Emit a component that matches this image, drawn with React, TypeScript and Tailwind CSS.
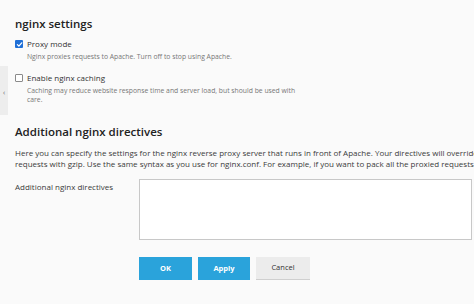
import React from 'react';

const font = { fontFamily: '"Open Sans", "Liberation Sans", sans-serif' };

const CheckBox = ({ checked }: { checked: boolean }) =>
  checked ? (
    <span className="w-[8px] h-[8px] rounded-[1px] bg-[#1f6fd6] flex items-center justify-center shrink-0">
      <svg viewBox="0 0 10 10" className="w-[7px] h-[7px]">
        <path d="M2 5.2 L4.1 7.3 L8.2 2.6" fill="none" stroke="white" strokeWidth="1.8" strokeLinecap="round" strokeLinejoin="round" />
      </svg>
    </span>
  ) : (
    <span className="w-[8px] h-[8px] rounded-[1px] bg-white border border-[#8a8a8a] shrink-0" />
  );

const App = () => {
  return (
    <div className="w-[474px] h-[304px] overflow-hidden bg-[#fafafa] relative text-[#333]" style={font}>
      {/* collapse sidebar tab */}
      <div className="absolute left-0 top-[66px] w-[8px] h-[49px] bg-[#ededed] flex items-center justify-center pt-[4px]">
        <span className="text-[7px] leading-none text-[#666]">‹</span>
      </div>

      <div className="pl-[15px] w-[900px]">
        <h2 className="text-[11.5px] leading-[16px] font-semibold pt-[16px] text-[#222]">nginx settings</h2>

        {/* Proxy mode */}
        <div className="flex items-center gap-[4px] mt-[7px] h-[10px]">
          <CheckBox checked />
          <span className="text-[8px] leading-[10px]">Proxy mode</span>
        </div>
        <p className="ml-[12px] mt-[3px] text-[6.8px] leading-[9px] text-[#777]">
          Nginx proxies requests to Apache. Turn off to stop using Apache.
        </p>

        {/* caching */}
        <div className="flex items-center gap-[4px] mt-[12px] h-[10px]">
          <CheckBox checked={false} />
          <span className="text-[8px] leading-[10px]">Enable nginx caching</span>
        </div>
        <p className="ml-[12px] mt-[3px] text-[6.8px] leading-[9px] text-[#777] w-[278px]">
          Caching may reduce website response time and server load, but should be used with care.
        </p>

        <h2 className="text-[11.5px] leading-[16px] font-semibold mt-[20px] text-[#222]">Additional nginx directives</h2>
        <p className="mt-[7px] text-[8px] leading-[11px] text-[#3a3a3a]">
          <span className="block whitespace-nowrap">
            Here you can specify the settings for the nginx reverse proxy server that runs in front of Apache. Your directives will override the server-wide nginx configuration. For example, you may want to change the connection timeout or to pack
          </span>
          <span className="block whitespace-nowrap">
            requests with gzip. Use the same syntax as you use for nginx.conf. For example, if you want to pack all the proxied requests with gzip, add the line: 'gzip_proxied any;'.
          </span>
        </p>

        <div className="flex mt-[10px]">
          <label className="w-[124px] shrink-0 pt-[3px] text-[8px] leading-[10px] text-[#3a3a3a]">
            Additional nginx directives
          </label>
          <div className="w-[333px] h-[61px] bg-white border border-[#c8c8c8] shrink-0" />
        </div>

        <div className="flex gap-[6px] mt-[17px] ml-[124px]">
          <button className="w-[53px] h-[23px] bg-[#2aa3db] text-white text-[7.5px] font-bold">OK</button>
          <button className="w-[52px] h-[23px] bg-[#2aa3db] text-white text-[7.5px] font-bold">Apply</button>
          <button className="w-[54px] h-[23px] bg-[#ececec] text-[#333] text-[7.5px] border-b border-[#cfcfcf]">Cancel</button>
        </div>
      </div>
    </div>
  );
};

export default App;
